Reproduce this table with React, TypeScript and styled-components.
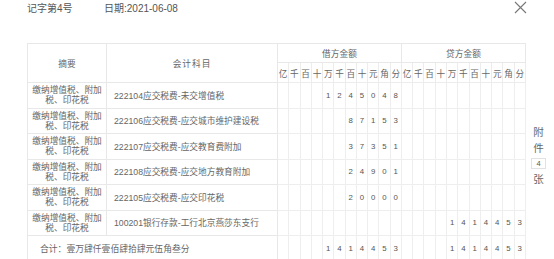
import styled, { createGlobalStyle, css } from "styled-components";

type Entry = {
  summary: string;
  account: string;
  debit?: string;
  credit?: string;
};

const entries: Entry[] = [
  { summary: "缴纳增值税、附加税、印花税", account: "222104应交税费-未交增值税", debit: "1245048" },
  { summary: "缴纳增值税、附加税、印花税", account: "222106应交税费-应交城市维护建设税", debit: "87153" },
  { summary: "缴纳增值税、附加税、印花税", account: "222107应交税费-应交教育费附加", debit: "37351" },
  { summary: "缴纳增值税、附加税、印花税", account: "222108应交税费-应交地方教育附加", debit: "24901" },
  { summary: "缴纳增值税、附加税、印花税", account: "222105应交税费-应交印花税", debit: "20000" },
  { summary: "缴纳增值税、附加税、印花税", account: "100201银行存款-工行北京燕莎东支行", credit: "1414453" },
];

const units = ["亿", "千", "百", "十", "万", "千", "百", "十", "元", "角", "分"];

// pad a cents string to 11 slots, right aligned
const toSlots = (value?: string) => {
  const slots: string[] = Array(11).fill("");
  if (!value) return slots;
  const chars = value.split("");
  chars.forEach((c, i) => {
    slots[11 - chars.length + i] = c;
  });
  return slots;
};

const GlobalStyle = createGlobalStyle`
  body {
    margin: 0;
    background: #fff;
    font-family: "Liberation Sans", "Noto Sans CJK SC", sans-serif;
    color: #666;
  }
`;

export default function App() {
  const renderSlots = (value?: string, keyBase = "") =>
    toSlots(value).map((d, i) => (
      <DigitCell key={keyBase + i} $index={i}>
        {d}
      </DigitCell>
    ));

  return (
    <>
      <GlobalStyle />
      <Page>
        <TopBar>
          <Title>记字第4号</Title>
          <DateText>日期:2021-06-08</DateText>
          <CloseButton aria-label="close">
            <svg width="13" height="13" viewBox="0 0 13 13">
              <path d="M1 1 L12 12 M12 1 L1 12" stroke="#777" strokeWidth="1.1" fill="none" />
            </svg>
          </CloseButton>
        </TopBar>
        <Body>
          <Voucher>
            <colgroup>
              <col style={{ width: 79 }} />
              <col style={{ width: 171 }} />
              {Array.from({ length: 22 }).map((_, i) => (
                <col key={i} />
              ))}
            </colgroup>
            <thead>
              <tr>
                <HeadCell rowSpan={2}>摘要</HeadCell>
                <HeadCell rowSpan={2} $spaced>
                  会计科目
                </HeadCell>
                <GroupCell colSpan={11}>借方金额</GroupCell>
                <GroupCell colSpan={11}>贷方金额</GroupCell>
              </tr>
              <tr>
                {units.map((u, i) => (
                  <UnitCell key={"d" + i} $index={i}>
                    {u}
                  </UnitCell>
                ))}
                {units.map((u, i) => (
                  <UnitCell key={"c" + i} $index={i}>
                    {u}
                  </UnitCell>
                ))}
              </tr>
            </thead>
            <tbody>
              {entries.map((e, r) => (
                <Row key={r}>
                  <SummaryCell>{e.summary}</SummaryCell>
                  <AccountCell>{e.account}</AccountCell>
                  {renderSlots(e.debit, "d")}
                  {renderSlots(e.credit, "c")}
                </Row>
              ))}
              <Row>
                <TotalCell colSpan={2}>合计：壹万肆仟壹佰肆拾肆元伍角叁分</TotalCell>
                {renderSlots("1414453", "td")}
                {renderSlots("1414453", "tc")}
              </Row>
            </tbody>
          </Voucher>
          <Attachment>
            <AttachChar>附</AttachChar>
            <AttachChar>件</AttachChar>
            <AttachCount>4</AttachCount>
            <AttachChar>张</AttachChar>
          </Attachment>
        </Body>
      </Page>
    </>
  );
}

const Page = styled.div`
  width: 554px;
  height: 259px;
  overflow: hidden;
  padding-left: 27px;
  box-sizing: border-box;
`;

const TopBar = styled.div`
  display: flex;
  align-items: center;
  height: 14px;
  width: 500px;
`;

const Title = styled.div`
  font-size: 10px;
  color: #555;
  width: 77px;
`;

const DateText = styled.div`
  font-size: 10px;
  color: #555;
`;

const CloseButton = styled.div`
  margin-left: auto;
  display: flex;
  align-items: center;
  height: 14px;
  margin-top: 1px;
`;

const Body = styled.div`
  display: flex;
  align-items: center;
  margin-top: 29px;
`;

const Voucher = styled.table`
  width: 499px;
  table-layout: fixed;
  border-collapse: collapse;
  flex-shrink: 0;
  font-size: 8.7px;
  color: #666;
`;

const baseCell = css`
  border: 1px solid #e8e8e8;
  padding: 0;
  text-align: center;
  vertical-align: middle;
`;

const HeadCell = styled.th<{ $spaced?: boolean }>`
  ${baseCell}
  font-weight: normal;
  height: 38px;
  letter-spacing: ${(p) => (p.$spaced ? "1px" : "0")};
`;

const GroupCell = styled.th`
  ${baseCell}
  font-weight: normal;
  height: 18px;
`;

const dividerColor = (i: number) => {
  if (i === 3 || i === 6) return "#b9dcf3";
  if (i === 9) return "#f3c6c6";
  return "#ececec";
};

const UnitCell = styled.th<{ $index: number }>`
  ${baseCell}
  font-weight: normal;
  font-size: 8.6px;
  height: 19px;
  border-color: #ececec;
  border-left-color: ${(p) => (p.$index === 0 ? "#e3e3e3" : dividerColor(p.$index))};
`;

const Row = styled.tr`
  height: 25.5px;
`;

const SummaryCell = styled.td`
  ${baseCell}
  padding: 1px 3px;
  line-height: 10px;
  word-break: break-all;
`;

const AccountCell = styled.td`
  ${baseCell}
  text-align: left;
  padding-left: 7px;
  white-space: nowrap;
`;

const TotalCell = styled.td`
  ${baseCell}
  text-align: left;
  padding-left: 12px;
  font-size: 8.8px;
`;

const DigitCell = styled.td<{ $index: number }>`
  ${baseCell}
  font-size: 7.8px;
  color: #555;
  border-color: #eeeeee;
  border-left-color: ${(p) => (p.$index === 0 ? "#e6e6e6" : dividerColor(p.$index))};
`;

const Attachment = styled.div`
  display: flex;
  flex-direction: column;
  align-items: center;
  margin-left: 5px;
  gap: 4px;
  margin-top: 6px;
`;

const AttachChar = styled.div`
  font-size: 10.5px;
  color: #666;
  line-height: 12px;
`;

const AttachCount = styled.div`
  width: 13px;
  height: 9px;
  border: 1px solid #e2e2e2;
  font-size: 7.5px;
  line-height: 9px;
  text-align: center;
  color: #555;
`;
